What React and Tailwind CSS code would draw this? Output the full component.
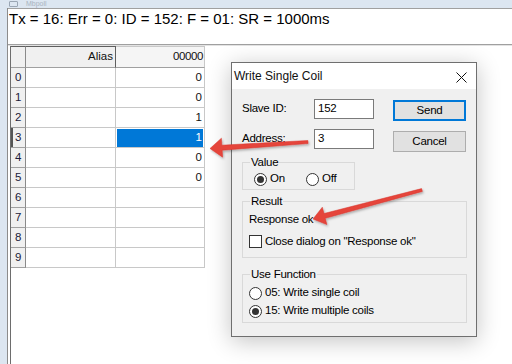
import React from "react";

const rows = [
  { n: "0", v: "0" },
  { n: "1", v: "0" },
  { n: "2", v: "1" },
  { n: "3", v: "1", sel: true },
  { n: "4", v: "0" },
  { n: "5", v: "0" },
  { n: "6", v: "" },
  { n: "7", v: "" },
  { n: "8", v: "" },
  { n: "9", v: "" },
];

const Radio = ({ checked }) => (
  <span className="w-[13px] h-[13px] rounded-full border border-[#333333] bg-white flex items-center justify-center shrink-0">
    {checked && <span className="w-[7px] h-[7px] rounded-full bg-[#333333]" />}
  </span>
);

const Group = ({ title, className, children }) => (
  <fieldset className={`border border-[#d9d9d9] ${className}`}>
    <legend className="ml-[7px] px-[1px] leading-[14px]">{title}</legend>
    {children}
  </fieldset>
);

const Grid = () => (
  <div className="w-[194px] text-[11.5px] text-[#111111]">
    {/* header */}
    <div className="flex h-[22px]">
      <div className="w-[15px] bg-[#f0f0f0] border-t border-b border-r border-t-[#5f5f5f] border-b-[#a0a0a0] border-r-[#8a8a8a]" />
      <div className="w-[90px] bg-[#f0f0f0] border-t border-b border-r border-t-[#5f5f5f] border-b-[#a0a0a0] border-r-[#5f5f5f] flex items-center justify-end pr-[2px]">
        Alias
      </div>
      <div className="w-[89px] bg-[#f5f5f5] border-t border-b border-r border-t-[#c8c8c8] border-b-[#a0a0a0] border-r-[#c8c8c8] flex items-center justify-end pr-[1px] tracking-[-0.4px]">
        00000
      </div>
    </div>
    {rows.map((r) => (
      <div key={r.n} className="flex h-[20px]">
        <div
          className={`w-[15px] bg-[#f0f0f0] border-b border-r border-b-[#a0a0a0] border-r-[#8a8a8a] flex items-center pl-[4px] text-[#1b1b3a] ${
            r.sel ? "shadow-[inset_2px_0_0_#555555]" : ""
          }`}
        >
          {r.n}
        </div>
        <div className="w-[90px] bg-white border-b border-r border-[#c8c8c8]" />
        <div className="w-[89px] bg-white border-b border-r border-[#c8c8c8] p-[1px] pb-0">
          {r.sel ? (
            <div className="h-full bg-[#0078d7] text-white flex items-center justify-end pr-[1px]">{r.v}</div>
          ) : (
            <div className="h-full flex items-center justify-end pr-[1px]">{r.v}</div>
          )}
        </div>
      </div>
    ))}
  </div>
);

const Dialog = () => (
  <div className="absolute left-[231px] top-[62px] w-[246px] h-[275px] border border-[#6f6f6f] bg-[#f0f0f0] shadow-[0_4px_22px_rgba(0,0,0,0.24)] text-[11.5px] tracking-[-0.25px] text-black">
    <div className="h-[26px] bg-white flex items-center justify-between pl-[2px] pr-[9px]">
      <span className="text-[12px] tracking-normal text-[#111111]">Write Single Coil</span>
      <svg width="11" height="11" viewBox="0 0 11 11" className="mt-[2px]">
        <path d="M0.5 0.5 L10.5 10.5 M10.5 0.5 L0.5 10.5" stroke="#111111" strokeWidth="1" />
      </svg>
    </div>
    <div className="pl-[10px] pt-[10px]">
      <div className="flex items-start">
        <div className="w-[72px] h-[20px] flex items-center">Slave ID:</div>
        <div className="w-[60px] h-[20px] border border-[#7a7a7a] bg-white flex items-center pl-[3px]">152</div>
        <button className="ml-[19px] mt-[1px] w-[73px] h-[21px] border-2 border-[#0078d7] bg-[#e1e1e1] flex items-center justify-center">
          Send
        </button>
      </div>
      <div className="flex items-start mt-[8px]">
        <div className="w-[72px] h-[20px] flex items-center">Address:</div>
        <div className="w-[60px] h-[20px] border border-[#7a7a7a] bg-white flex items-center pl-[3px]">3</div>
        <button className="ml-[19px] mt-[2px] w-[73px] h-[21px] border border-[#adadad] bg-[#e1e1e1] flex items-center justify-center">
          Cancel
        </button>
      </div>
      <Group title="Value" className="mt-[3px] w-[113px]">
        <div className="h-[20px] flex items-center pl-[11px]">
          <div className="w-[52px] flex items-center gap-[3px]">
            <Radio checked />
            <span>On</span>
          </div>
          <div className="flex items-center gap-[3px]">
            <Radio />
            <span>Off</span>
          </div>
        </div>
      </Group>
      <Group title="Result" className="mt-[4px] w-[225px]">
        <div className="pl-[6px] pt-[4px] pb-[9px]">
          <div className="leading-[14px]">Response ok</div>
          <div className="mt-[9px] h-[13px] flex items-center gap-[3px]">
            <span className="w-[13px] h-[13px] border border-[#333333] bg-white shrink-0" />
            <span>Close dialog on "Response ok"</span>
          </div>
        </div>
      </Group>
      <Group title="Use Function" className="mt-[9px] w-[225px]">
        <div className="pl-[6px] pt-[3px] pb-[2px]">
          <div className="h-[18px] flex items-center gap-[3px]">
            <Radio />
            <span>05: Write single coil</span>
          </div>
          <div className="h-[18px] flex items-center gap-[3px]">
            <Radio checked />
            <span>15: Write multiple coils</span>
          </div>
        </div>
      </Group>
    </div>
  </div>
);

const Arrows = () => (
  <svg className="absolute left-0 top-0 pointer-events-none" width="512" height="364" viewBox="0 0 512 364">
    <defs>
      <filter id="ash" x="-10%" y="-30%" width="130%" height="170%">
        <feDropShadow dx="1" dy="1.5" stdDeviation="1.2" floodColor="#000000" floodOpacity="0.3" />
      </filter>
    </defs>
    <g fill="#e5443b" filter="url(#ash)" stroke="#d8362e" strokeWidth="0.5" strokeLinejoin="round">
      <polygon points="307.9,140.5 221.8,145.2 221.4,138.2 210,148.5 222.6,157.2 222.2,150.2 308.1,143.5" />
      <polygon points="421.6,188.6 324,213.5 322.3,207.2 313,219 326.9,224.6 325.2,218.3 422.4,191.4" />
    </g>
  </svg>
);

export default function App() {
  return (
    <div className="relative w-[512px] h-[364px] overflow-hidden bg-white font-['Liberation_Sans',Arial,sans-serif]">
      {/* faded parent title strip */}
      <div className="h-[8px] bg-[#dce6f1] flex items-center pl-[9px] gap-[8px]">
        <span className="w-[9px] h-[6px] border border-[#9aa6b4] rounded-[1px]" />
        <span className="text-[7px] leading-[8px] text-[#a9b3bf]">Mbpoll</span>
      </div>
      <div className="flex h-[356px]">
        <div className="w-[7px] bg-[#dce6f1]" />
        <div className="flex-1 flex flex-col border-l border-[#8c8c8c]">
          {/* status line */}
          <div className="h-[37px] bg-white border-t border-b border-[#a0a0a0] pl-[1px] pt-[1px]">
            <div className="text-[15px] leading-[17px] text-black whitespace-pre">
              Tx = 16: Err = 0: ID = 152: F = 01: SR = 1000ms
            </div>
          </div>
          <div className="h-[1px] bg-[#e3e3e3]" />
          {/* child window */}
          <div className="flex-1 flex pl-[2px] bg-white">
            <div className="flex-1 border-l border-[#6d6d6d]">
              <Grid />
            </div>
          </div>
        </div>
      </div>
      <Dialog />
      <Arrows />
    </div>
  );
}
